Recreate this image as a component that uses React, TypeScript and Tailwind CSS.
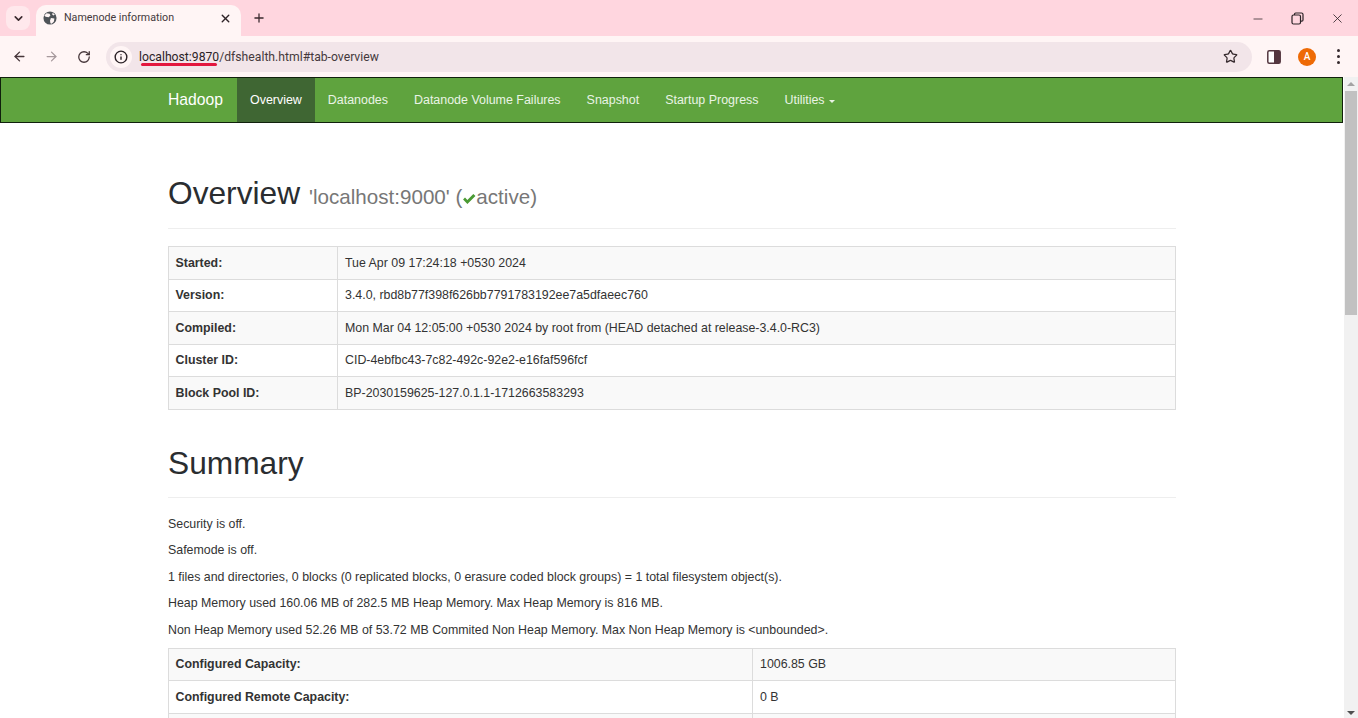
import { ArrowLeft, ArrowRight, RotateCw, Star, Plus, X, ChevronDown, Minus, Info } from "lucide-react";

const overview = [
  ["Started:", "Tue Apr 09 17:24:18 +0530 2024"],
  ["Version:", "3.4.0, rbd8b77f398f626bb7791783192ee7a5dfaeec760"],
  ["Compiled:", "Mon Mar 04 12:05:00 +0530 2024 by root from (HEAD detached at release-3.4.0-RC3)"],
  ["Cluster ID:", "CID-4ebfbc43-7c82-492c-92e2-e16faf596fcf"],
  ["Block Pool ID:", "BP-2030159625-127.0.1.1-1712663583293"],
];

const capacity = [
  ["Configured Capacity:", "1006.85 GB"],
  ["Configured Remote Capacity:", "0 B"],
  ["", ""],
];

const summary = [
  "Security is off.",
  "Safemode is off.",
  "1 files and directories, 0 blocks (0 replicated blocks, 0 erasure coded block groups) = 1 total filesystem object(s).",
  "Heap Memory used 160.06 MB of 282.5 MB Heap Memory. Max Heap Memory is 816 MB.",
  "Non Heap Memory used 52.26 MB of 53.72 MB Commited Non Heap Memory. Max Non Heap Memory is <unbounded>.",
];

function InfoTable({ rows, col }: { rows: string[][]; col: string }) {
  return (
    <table className="w-full border-collapse border border-[#dcdcdc] text-[12.38px] text-[#333]">
      <colgroup>
        <col className={col} />
        <col />
      </colgroup>
      <tbody>
        {rows.map(([k, v], i) => (
          <tr key={i} className={i % 2 === 0 ? "h-[32.5px] bg-[#f9f9f9]" : "h-[32.5px] bg-white"}>
            <th className="border border-[#dcdcdc] pl-[6.5px] pt-px text-left font-bold">{k}</th>
            <td className="border border-[#dcdcdc] pl-[7px] pt-px">{v}</td>
          </tr>
        ))}
      </tbody>
    </table>
  );
}

export default function App() {
  return (
    <div className="flex h-[718px] w-[1358px] flex-col overflow-hidden bg-white font-['Liberation_Sans',Arial,sans-serif]">
      {/* Tab strip */}
      <div className="flex h-9 items-end bg-[#ffd6df] pl-[6px] font-['Inter','Liberation_Sans',sans-serif]">
        <div className="mb-[6px] flex h-6 w-6 items-center justify-center rounded-lg bg-[#ffe8ec] text-[#3a2a2e]">
          <ChevronDown size={13} strokeWidth={3} />
        </div>
        <div className="ml-[6px] flex h-[31px] w-[205px] items-center rounded-t-[10px] bg-[#fff5f5] pb-[5px] pl-[7px] pr-[9px]">
          <svg width="14" height="14" viewBox="0 0 16 16" className="text-[#4f5358]">
            <circle cx="8" cy="8" r="7.5" fill="currentColor" />
            <path d="M4 2.5 L7.5 3 L8.5 5 L6.5 7 L3 6.5 L1.5 5 Z M9 8 L13 8.5 L12.5 12 L10 14.5 L8.5 14 L8 11 Z M11 2 L13.5 4 L12 5 L10.5 4 Z" fill="#fff5f5" />
          </svg>
          <span className="ml-[7px] flex-1 pt-px text-[10.7px] font-['Roboto','Liberation_Sans',sans-serif] text-[#45393c]">Namenode information</span>
          <X size={13} strokeWidth={2.6} className="text-[#2d2226]" />
        </div>
        <Plus size={14} strokeWidth={2.2} className="mb-[11px] ml-[11px] text-[#3a2a2e]" />
        <div className="flex-1" />
        <div className="mb-[10px] flex items-center gap-[26px] pr-[13px] text-[#2b2226]">
          <Minus size={14} strokeWidth={1.3} />
          <svg width="13" height="13" viewBox="0 0 13 13" fill="none" stroke="currentColor" strokeWidth="1.2">
            <rect x="1" y="3" width="8.5" height="9" rx="1.5" />
            <path d="M3.5 3V2.2A1.2 1.2 0 0 1 4.7 1H10.5A1.5 1.5 0 0 1 12 2.5V8A1.2 1.2 0 0 1 10.8 9.2H9.5" />
          </svg>
          <X size={15} strokeWidth={1.3} />
        </div>
      </div>

      {/* Toolbar */}
      <div className="relative flex h-[41px] items-center bg-[#fff5f5] pl-3 font-['Roboto','Liberation_Sans',sans-serif]">
        <ArrowLeft size={15} strokeWidth={2.2} className="text-[#46363a]" />
        <ArrowRight size={15} strokeWidth={2} className="ml-[17px] text-[#a6999c]" />
        <RotateCw size={14} strokeWidth={2.2} className="ml-[18px] text-[#46363a]" />
        <div className="ml-[15px] flex h-[30px] w-[1146px] items-center rounded-full bg-[#f2e5e9] pl-1 pr-[14px]">
          <div className="flex h-[22px] w-[22px] items-center justify-center rounded-full bg-[#fff5f5]">
            <Info size={14} strokeWidth={2.4} className="text-[#2b2226]" />
          </div>
          <span className="relative ml-[7px] flex-1 pt-px text-[12.2px] text-[#45393c]">
            <span className="text-[#2b2226]">localhost:9870</span>/dfshealth.html#tab-overview
            <span className="absolute left-[2px] top-[16px] h-[3px] w-[76px] rounded-full bg-[#e3173e]" />
          </span>
          <Star size={15} strokeWidth={2} className="text-[#35292d]" />
        </div>
        <svg width="14" height="14" viewBox="0 0 14 14" className="ml-[15px]">
          <rect x="0.8" y="0.8" width="12.4" height="12.4" rx="1.5" fill="#fff" stroke="#54363f" strokeWidth="1.5" />
          <rect x="7" y="1" width="6" height="12" fill="#54363f" />
        </svg>
        <div className="ml-[17px] flex h-[18px] w-[18px] items-center justify-center rounded-full bg-[#ee6a05] text-[10px] font-medium text-white">A</div>
        <div className="ml-[21px] flex flex-col gap-[3px]">
          <span className="h-[3px] w-[3px] rounded-full bg-[#35292d]" />
          <span className="h-[3px] w-[3px] rounded-full bg-[#35292d]" />
          <span className="h-[3px] w-[3px] rounded-full bg-[#35292d]" />
        </div>
      </div>

      {/* Viewport */}
      <div className="flex min-h-0 flex-1">
        <div className="min-w-0 flex-1 overflow-hidden">
          <nav className="mr-px flex h-[46px] items-center border border-[#10200c] bg-[#5fa33e] pl-[167px] text-[12.45px] text-[#eaf4e5]">
            <span className="w-[69px] text-[15.7px] text-white">Hadoop</span>
            <span className="flex h-full items-center bg-[#3f6633] px-[13px] text-white">Overview</span>
            <span className="flex h-full items-center px-[13px]">Datanodes</span>
            <span className="flex h-full items-center px-[13px]">Datanode Volume Failures</span>
            <span className="flex h-full items-center px-[13px]">Snapshot</span>
            <span className="flex h-full items-center px-[13px]">Startup Progress</span>
            <span className="flex h-full items-center px-[13px]">
              Utilities
              <span className="ml-[4px] mt-[2px] h-0 w-0 border-x-[3.5px] border-t-[3.5px] border-x-transparent border-t-[#eaf4e5]" />
            </span>
          </nav>

          <main className="ml-[168px] w-[1008px]">
            <div className="mt-[50px] flex h-[40px] items-baseline text-[31.7px] leading-[40px] text-[#2a2d30]">
              <h1>Overview</h1>
              <span className="ml-[9px] text-[20.6px] text-[#777]">
                'localhost:9000' (<svg width="14" height="12" viewBox="0 0 13 11" className="inline-block align-[-1px] text-[#4a9a33]"><path d="M1 6 L2.8 4.2 L5 6.4 L10.5 0.8 L12.5 2.7 L5 10.2 Z" fill="currentColor" /></svg>active)
              </span>
            </div>
            <div className="mt-[15px] h-px bg-[#eeeeee]" />
            <div className="mt-[17px]">
              <InfoTable rows={overview} col="w-[169px]" />
            </div>

            <h2 className="mt-[33px] h-[40px] text-[31.7px] leading-[40px] text-[#2a2d30]">Summary</h2>
            <div className="mt-[14px] h-px bg-[#eeeeee]" />
            <div className="mt-[17px] flex flex-col gap-[8.5px] text-[12.38px] leading-[18px] text-[#333]">
              {summary.map((s) => (
                <p key={s}>{s}</p>
              ))}
            </div>
            <div className="mt-[9px]">
              <InfoTable rows={capacity} col="w-[584px]" />
            </div>
          </main>
        </div>

        {/* Scrollbar */}
        <div className="relative w-[14px] bg-[#f1f1f1]">
          <div className="flex h-[14px] items-center justify-center">
            <span className="h-0 w-0 border-x-[4px] border-b-[4px] border-x-transparent border-b-[#a3a3a3]" />
          </div>
          <div className="mx-[1px] h-[224px] bg-[#c1c1c1]" />
          <span className="absolute bottom-[3px] left-[3px] h-0 w-0 border-x-[4px] border-t-[4px] border-x-transparent border-t-[#505050]" />
        </div>
      </div>
    </div>
  );
}
